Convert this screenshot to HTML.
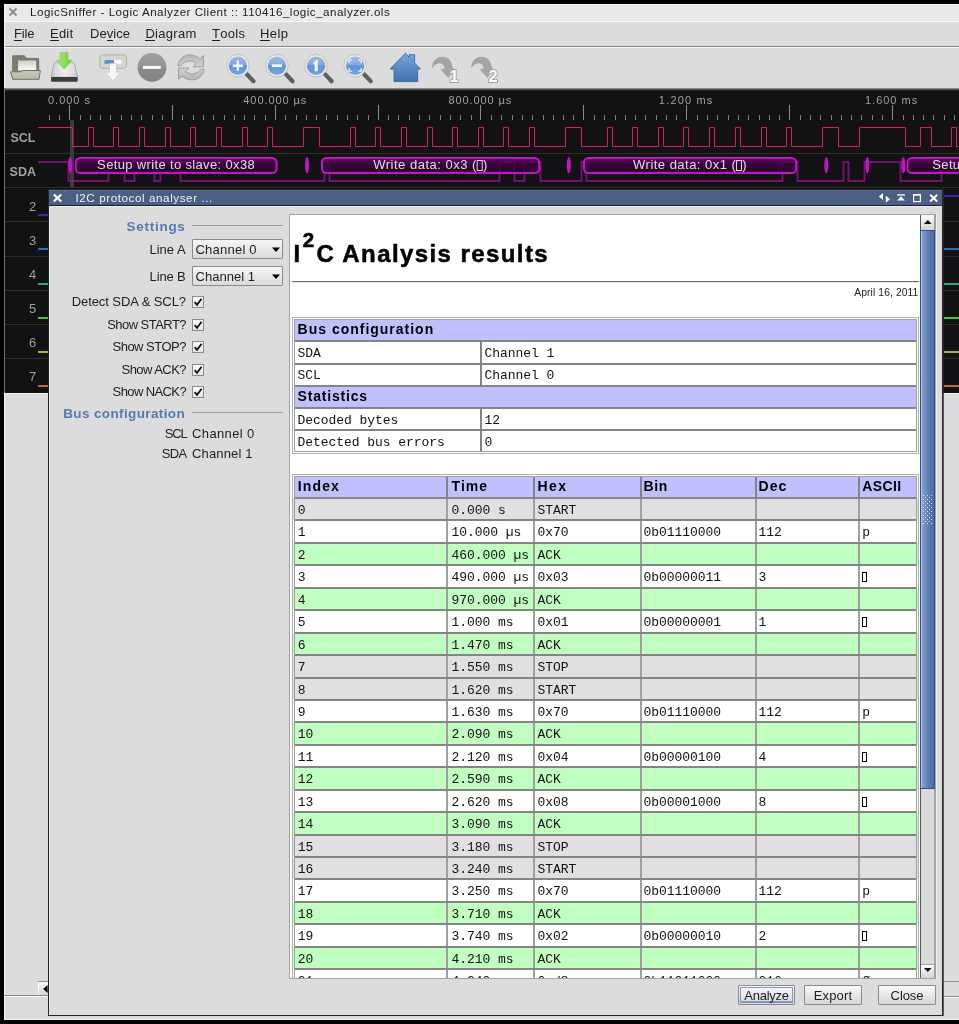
<!DOCTYPE html><html><head><meta charset="utf-8"><style>
html,body{margin:0;padding:0;width:959px;height:1024px;overflow:hidden;background:#000}
div,span,svg{position:absolute;display:block}
span{white-space:pre;font-kerning:none}
u{text-decoration:none;border-bottom:1px solid currentColor;display:inline-block;line-height:1;padding-bottom:0}
svg{overflow:visible}
</style></head><body>
<div style="left:0;top:0;width:959px;height:1024px;will-change:transform">
<div style="left:4px;top:4px;width:955px;height:1016px;background:#dcdcdc;"></div>
<div style="left:4px;top:4px;width:955px;height:17px;background:#e9e9e9;"></div>
<div style="left:4px;top:4px;width:955px;height:1px;background:#f6f6f6;"></div>
<div style="left:4px;top:21px;width:955px;height:1px;background:#f8f8f8;"></div>
<svg style="left:8px;top:7px;" width="10" height="10" viewBox="0 0 10 10"><path d="M1.5 1.5L8.5 8.5M8.5 1.5L1.5 8.5" stroke="#8c8c8c" stroke-width="2" fill="none"/></svg>
<span id="t0" style="left:30px;top:5px;font:400 11.6px/normal 'Liberation Sans',sans-serif;color:#1c1c1c;letter-spacing:0.491px;">LogicSniffer - Logic Analyzer Client :: 110416_logic_analyzer.ols</span>
<span id="t1" style="left:14px;top:26px;font:400 13px/normal 'Liberation Sans',sans-serif;color:#1e1e1e;letter-spacing:-0.156px;"><u>F</u>ile</span>
<span id="t2" style="left:50px;top:26px;font:400 13px/normal 'Liberation Sans',sans-serif;color:#1e1e1e;letter-spacing:0.198px;"><u>E</u>dit</span>
<span id="t3" style="left:90px;top:26px;font:400 13px/normal 'Liberation Sans',sans-serif;color:#1e1e1e;letter-spacing:0.050px;">De<u>v</u>ice</span>
<span id="t4" style="left:145.4px;top:26px;font:400 13px/normal 'Liberation Sans',sans-serif;color:#1e1e1e;letter-spacing:0.310px;"><u>D</u>iagram</span>
<span id="t5" style="left:212px;top:26px;font:400 13px/normal 'Liberation Sans',sans-serif;color:#1e1e1e;letter-spacing:0.297px;"><u>T</u>ools</span>
<span id="t6" style="left:260px;top:26px;font:400 13px/normal 'Liberation Sans',sans-serif;color:#1e1e1e;letter-spacing:0.417px;"><u>H</u>elp</span>
<div style="left:4px;top:46px;width:955px;height:1px;background:#868686;"></div>
<div style="left:4px;top:47px;width:955px;height:1px;background:#f6f6f6;"></div>
<div style="left:4px;top:88px;width:955px;height:1px;background:#8a8a8a;"></div>
<div style="left:4px;top:89px;width:955px;height:1px;background:#4a4a4a;"></div>
<div style="left:4px;top:90px;width:955px;height:1px;background:#262626;"></div>
<div style="left:5px;top:91px;width:954px;height:302px;background:#121212;"></div>
<div style="left:4px;top:88px;width:1px;height:305px;background:#6e6e6e;"></div>
<div style="left:4px;top:4px;width:1px;height:84px;background:#f4f4f4;"></div>
<div style="left:4px;top:393px;width:955px;height:1px;background:#f6f6f6;"></div>
<div style="left:4px;top:394px;width:1px;height:626px;background:#f4f4f4;"></div>
<svg style="left:0px;top:0px;" width="520" height="90" viewBox="0 0 520 90">
<defs>
<linearGradient id="gPaper" x1="0" y1="0" x2="0" y2="1"><stop offset="0" stop-color="#cfcfcf"/><stop offset="1" stop-color="#fbfbfb"/></linearGradient>
<linearGradient id="gFront" x1="0" y1="0" x2="0" y2="1"><stop offset="0" stop-color="#c8cab6"/><stop offset="1" stop-color="#b8baa6"/></linearGradient>
<linearGradient id="gArrow" x1="0" y1="0" x2="1" y2="0"><stop offset="0" stop-color="#a6e67a"/><stop offset="0.55" stop-color="#8ede55"/><stop offset="1" stop-color="#68c83a"/></linearGradient>
<linearGradient id="gDrive" x1="0" y1="0" x2="1" y2="0"><stop offset="0" stop-color="#c8c8c8"/><stop offset="0.5" stop-color="#f0f0f0"/><stop offset="1" stop-color="#cfcfcf"/></linearGradient>
<linearGradient id="gMinus" x1="0" y1="0" x2="0" y2="1"><stop offset="0" stop-color="#9c9c9c"/><stop offset="0.5" stop-color="#959595"/><stop offset="0.52" stop-color="#888888"/><stop offset="1" stop-color="#858585"/></linearGradient>
<linearGradient id="gRef" x1="0" y1="0" x2="0" y2="1"><stop offset="0" stop-color="#b4b4b4"/><stop offset="1" stop-color="#d0d0d0"/></linearGradient>
<linearGradient id="gZoom" x1="0" y1="0" x2="0" y2="1"><stop offset="0" stop-color="#9ab8e4"/><stop offset="0.45" stop-color="#85a9de"/><stop offset="0.5" stop-color="#5f93d6"/><stop offset="1" stop-color="#70a8ea"/></linearGradient>
<linearGradient id="gHome" x1="0" y1="0" x2="0" y2="1"><stop offset="0" stop-color="#7aa6da"/><stop offset="1" stop-color="#3f72b2"/></linearGradient>
</defs>
<!-- folder -->
<path d="M12.7 55.7H24.4L26.4 58.4H38.7V71.4H12.7Z" fill="#7c7e6c" stroke="#66685a" stroke-width="0.8"/>
<rect x="18.1" y="60.5" width="18.1" height="10" fill="url(#gPaper)"/>
<path d="M10.6 71.8H21L22.5 70.5H40.4L39 79.3H12.7Z" fill="url(#gFront)" stroke="#707266" stroke-width="1"/>
<!-- drive -->
<path d="M56 62.4H72.5Q74.2 62.4 74.6 64L77.7 77.2H51L53.9 64Q54.3 62.4 56 62.4Z" fill="url(#gDrive)" stroke="#a0a0a0" stroke-width="0.8"/>
<ellipse cx="64.4" cy="70.5" rx="9" ry="3.5" fill="none" stroke="#e6e6e6" stroke-width="1"/>
<rect x="51" y="77" width="26.7" height="4.8" rx="1.4" fill="#3a3d3d"/>
<path d="M60.2 52.6H67.9V60.3H71.9L64.1 69.3L56.6 60.3H60.2Z" fill="url(#gArrow)" stroke="#72c444" stroke-width="0.6"/>
<!-- capture -->
<rect x="99.7" y="54.9" width="26.9" height="13.5" rx="3.2" fill="#d4d7ce" stroke="#b0b2ac" stroke-width="1"/>
<rect x="104.5" y="60.1" width="9.6" height="3.6" fill="#5b90d2"/>
<rect x="114.1" y="60.1" width="7.7" height="3.6" fill="#fdfdfd"/>
<path d="M109.5 63.6H116.4V72.2H120.5L113 81L105.1 72.2H109.5Z" fill="#f6f6f6" stroke="#c4c4c4" stroke-width="0.6"/>
<!-- minus circle -->
<circle cx="152" cy="67.4" r="14.4" fill="url(#gMinus)"/>
<rect x="143" y="65.9" width="17.8" height="3" fill="#fafafa"/>
<!-- refresh -->
<g fill="url(#gRef)" stroke="#9c9c9c" stroke-width="0.9">
<path d="M177.7 65.5C179 58.5 184.5 54.9 190 54.9C194 54.9 197.5 56.5 200 58.6L203.5 55.5V66.8H193.1L196.4 63.4C194.2 61.6 191.8 61 189.6 61C186 61 183 62.8 181 65.5Z"/>
<path transform="rotate(180 191 67.4)" d="M177.7 65.5C179 58.5 184.5 54.9 190 54.9C194 54.9 197.5 56.5 200 58.6L203.5 55.5V66.8H193.1L196.4 63.4C194.2 61.6 191.8 61 189.6 61C186 61 183 62.8 181 65.5Z"/>
</g>
<line x1="246.85" y1="74.3" x2="253.45" y2="81.3" stroke="#5e625e" stroke-width="4.2" stroke-linecap="round"/><circle cx="237.85" cy="65.7" r="11.2" fill="#ecebe4" stroke="#b8b8b0" stroke-width="0.8"/><circle cx="237.85" cy="65.7" r="9.2" fill="url(#gZoom)"/><rect x="232.85" y="64.5" width="10" height="2.6" fill="#f4f6fa"/><rect x="236.75" y="60.5" width="2.2" height="10.2" fill="#f4f6fa"/><line x1="285.95" y1="74.3" x2="292.55" y2="81.3" stroke="#5e625e" stroke-width="4.2" stroke-linecap="round"/><circle cx="276.95" cy="65.7" r="11.2" fill="#ecebe4" stroke="#b8b8b0" stroke-width="0.8"/><circle cx="276.95" cy="65.7" r="9.2" fill="url(#gZoom)"/><rect x="271.95" y="64.3" width="10" height="2.8" fill="#f4f6fa"/><line x1="325.05" y1="74.3" x2="331.65000000000003" y2="81.3" stroke="#5e625e" stroke-width="4.2" stroke-linecap="round"/><circle cx="316.05" cy="65.7" r="11.2" fill="#ecebe4" stroke="#b8b8b0" stroke-width="0.8"/><circle cx="316.05" cy="65.7" r="9.2" fill="url(#gZoom)"/><path d="M313.45 62.5L316.45 59.7H317.85V71.2H314.65000000000003V63.7L313.45 64.7Z" fill="#f4f6fa"/><line x1="364.15" y1="74.3" x2="370.75" y2="81.3" stroke="#5e625e" stroke-width="4.2" stroke-linecap="round"/><circle cx="355.15" cy="65.7" r="11.2" fill="#ecebe4" stroke="#b8b8b0" stroke-width="0.8"/><circle cx="355.15" cy="65.7" r="9.2" fill="url(#gZoom)"/><path d="M349.15 63.2V60.2H352.15M361.15 63.2V60.2H358.15M349.15 68.2V71.2H352.15M361.15 68.2V71.2H358.15" stroke="#f0f4fa" stroke-width="1.3" fill="none"/>
<!-- home -->
<path d="M390.2 69.1L405.4 53.2L409.2 57.2V54.7H414.6V62.9L420.5 69.1H417.7V81.6H394V69.1Z" fill="url(#gHome)" stroke="#3767a6" stroke-width="0.9" stroke-linejoin="round"/>
<g transform="translate(0 0)"><path d="M432 68.5C432 61 436.5 56.8 442.5 56.8C448 56.8 451.8 61 452.2 66.2L453.8 68.9L448.4 78L440.4 69.3L444.6 68.4C444.2 65.4 442.2 63.2 439.2 63.2C436.2 63.2 433.6 65.5 432 68.5Z" fill="#a4a4a4"/>
<text x="454" y="81.8" text-anchor="middle" font-family="Liberation Sans" font-weight="700" font-size="16.5" fill="#ffffff" stroke="#a0a0a0" stroke-width="1.8" paint-order="stroke">1</text></g><g transform="translate(39.2 0)"><path d="M432 68.5C432 61 436.5 56.8 442.5 56.8C448 56.8 451.8 61 452.2 66.2L453.8 68.9L448.4 78L440.4 69.3L444.6 68.4C444.2 65.4 442.2 63.2 439.2 63.2C436.2 63.2 433.6 65.5 432 68.5Z" fill="#a4a4a4"/>
<text x="454" y="81.8" text-anchor="middle" font-family="Liberation Sans" font-weight="700" font-size="16.5" fill="#ffffff" stroke="#a0a0a0" stroke-width="1.8" paint-order="stroke">2</text></g></svg>
<svg style="left:0px;top:0px;" width="959" height="400" viewBox="0 0 959 400"><rect x="5" y="153" width="954" height="1" fill="#2e2e2e"/><rect x="5" y="187" width="954" height="1" fill="#2e2e2e"/><rect x="5" y="221" width="954" height="1" fill="#2e2e2e"/><rect x="5" y="256" width="954" height="1" fill="#2e2e2e"/><rect x="5" y="290" width="954" height="1" fill="#2e2e2e"/><rect x="5" y="324" width="954" height="1" fill="#2e2e2e"/><rect x="5" y="358" width="954" height="1" fill="#2e2e2e"/><rect x="69" y="105" width="1" height="15" fill="#8c8c8c"/><rect x="172" y="105" width="1" height="15" fill="#8c8c8c"/><rect x="275" y="105" width="1" height="15" fill="#8c8c8c"/><rect x="378" y="105" width="1" height="15" fill="#8c8c8c"/><rect x="480" y="105" width="1" height="15" fill="#8c8c8c"/><rect x="583" y="105" width="1" height="15" fill="#8c8c8c"/><rect x="686" y="105" width="1" height="15" fill="#8c8c8c"/><rect x="789" y="105" width="1" height="15" fill="#8c8c8c"/><rect x="892" y="105" width="1" height="15" fill="#8c8c8c"/><rect x="49" y="115" width="1" height="5" fill="#7c7c7c"/><rect x="59" y="115" width="1" height="5" fill="#7c7c7c"/><rect x="80" y="115" width="1" height="5" fill="#7c7c7c"/><rect x="90" y="115" width="1" height="5" fill="#7c7c7c"/><rect x="100" y="115" width="1" height="5" fill="#7c7c7c"/><rect x="110" y="115" width="1" height="5" fill="#7c7c7c"/><rect x="121" y="115" width="1" height="5" fill="#7c7c7c"/><rect x="131" y="115" width="1" height="5" fill="#7c7c7c"/><rect x="141" y="115" width="1" height="5" fill="#7c7c7c"/><rect x="152" y="115" width="1" height="5" fill="#7c7c7c"/><rect x="162" y="115" width="1" height="5" fill="#7c7c7c"/><rect x="182" y="115" width="1" height="5" fill="#7c7c7c"/><rect x="193" y="115" width="1" height="5" fill="#7c7c7c"/><rect x="203" y="115" width="1" height="5" fill="#7c7c7c"/><rect x="213" y="115" width="1" height="5" fill="#7c7c7c"/><rect x="224" y="115" width="1" height="5" fill="#7c7c7c"/><rect x="234" y="115" width="1" height="5" fill="#7c7c7c"/><rect x="244" y="115" width="1" height="5" fill="#7c7c7c"/><rect x="254" y="115" width="1" height="5" fill="#7c7c7c"/><rect x="265" y="115" width="1" height="5" fill="#7c7c7c"/><rect x="285" y="115" width="1" height="5" fill="#7c7c7c"/><rect x="296" y="115" width="1" height="5" fill="#7c7c7c"/><rect x="306" y="115" width="1" height="5" fill="#7c7c7c"/><rect x="316" y="115" width="1" height="5" fill="#7c7c7c"/><rect x="326" y="115" width="1" height="5" fill="#7c7c7c"/><rect x="337" y="115" width="1" height="5" fill="#7c7c7c"/><rect x="347" y="115" width="1" height="5" fill="#7c7c7c"/><rect x="357" y="115" width="1" height="5" fill="#7c7c7c"/><rect x="368" y="115" width="1" height="5" fill="#7c7c7c"/><rect x="388" y="115" width="1" height="5" fill="#7c7c7c"/><rect x="398" y="115" width="1" height="5" fill="#7c7c7c"/><rect x="409" y="115" width="1" height="5" fill="#7c7c7c"/><rect x="419" y="115" width="1" height="5" fill="#7c7c7c"/><rect x="429" y="115" width="1" height="5" fill="#7c7c7c"/><rect x="440" y="115" width="1" height="5" fill="#7c7c7c"/><rect x="450" y="115" width="1" height="5" fill="#7c7c7c"/><rect x="460" y="115" width="1" height="5" fill="#7c7c7c"/><rect x="471" y="115" width="1" height="5" fill="#7c7c7c"/><rect x="491" y="115" width="1" height="5" fill="#7c7c7c"/><rect x="501" y="115" width="1" height="5" fill="#7c7c7c"/><rect x="512" y="115" width="1" height="5" fill="#7c7c7c"/><rect x="522" y="115" width="1" height="5" fill="#7c7c7c"/><rect x="532" y="115" width="1" height="5" fill="#7c7c7c"/><rect x="543" y="115" width="1" height="5" fill="#7c7c7c"/><rect x="553" y="115" width="1" height="5" fill="#7c7c7c"/><rect x="563" y="115" width="1" height="5" fill="#7c7c7c"/><rect x="573" y="115" width="1" height="5" fill="#7c7c7c"/><rect x="594" y="115" width="1" height="5" fill="#7c7c7c"/><rect x="604" y="115" width="1" height="5" fill="#7c7c7c"/><rect x="615" y="115" width="1" height="5" fill="#7c7c7c"/><rect x="625" y="115" width="1" height="5" fill="#7c7c7c"/><rect x="635" y="115" width="1" height="5" fill="#7c7c7c"/><rect x="645" y="115" width="1" height="5" fill="#7c7c7c"/><rect x="656" y="115" width="1" height="5" fill="#7c7c7c"/><rect x="666" y="115" width="1" height="5" fill="#7c7c7c"/><rect x="676" y="115" width="1" height="5" fill="#7c7c7c"/><rect x="697" y="115" width="1" height="5" fill="#7c7c7c"/><rect x="707" y="115" width="1" height="5" fill="#7c7c7c"/><rect x="717" y="115" width="1" height="5" fill="#7c7c7c"/><rect x="728" y="115" width="1" height="5" fill="#7c7c7c"/><rect x="738" y="115" width="1" height="5" fill="#7c7c7c"/><rect x="748" y="115" width="1" height="5" fill="#7c7c7c"/><rect x="759" y="115" width="1" height="5" fill="#7c7c7c"/><rect x="769" y="115" width="1" height="5" fill="#7c7c7c"/><rect x="779" y="115" width="1" height="5" fill="#7c7c7c"/><rect x="800" y="115" width="1" height="5" fill="#7c7c7c"/><rect x="810" y="115" width="1" height="5" fill="#7c7c7c"/><rect x="820" y="115" width="1" height="5" fill="#7c7c7c"/><rect x="831" y="115" width="1" height="5" fill="#7c7c7c"/><rect x="841" y="115" width="1" height="5" fill="#7c7c7c"/><rect x="851" y="115" width="1" height="5" fill="#7c7c7c"/><rect x="861" y="115" width="1" height="5" fill="#7c7c7c"/><rect x="872" y="115" width="1" height="5" fill="#7c7c7c"/><rect x="882" y="115" width="1" height="5" fill="#7c7c7c"/><rect x="903" y="115" width="1" height="5" fill="#7c7c7c"/><rect x="913" y="115" width="1" height="5" fill="#7c7c7c"/><rect x="923" y="115" width="1" height="5" fill="#7c7c7c"/><rect x="933" y="115" width="1" height="5" fill="#7c7c7c"/><rect x="944" y="115" width="1" height="5" fill="#7c7c7c"/><rect x="954" y="115" width="1" height="5" fill="#7c7c7c"/><rect x="70" y="120" width="4" height="67" fill="#3a3a3a"/><polyline fill="none" stroke="#dc1e55" stroke-width="1" points="38,127.5 72.5,127.5 72.5,146.5 88.5,146.5 88.5,127.5 93.5,127.5 93.5,146.5 113.5,146.5 113.5,127.5 118.5,127.5 118.5,146.5 139.5,146.5 139.5,127.5 144.5,127.5 144.5,146.5 165.5,146.5 165.5,127.5 170.5,127.5 170.5,146.5 190.5,146.5 190.5,127.5 195.5,127.5 195.5,146.5 216.5,146.5 216.5,127.5 221.5,127.5 221.5,146.5 242.5,146.5 242.5,127.5 247.5,127.5 247.5,146.5 267.5,146.5 267.5,127.5 272.5,127.5 272.5,146.5 303.5,146.5 303.5,127.5 319.5,127.5 319.5,146.5 350.5,146.5 350.5,127.5 355.5,127.5 355.5,146.5 375.5,146.5 375.5,127.5 380.5,127.5 380.5,146.5 401.5,146.5 401.5,127.5 406.5,127.5 406.5,146.5 427.5,146.5 427.5,127.5 432.5,127.5 432.5,146.5 452.5,146.5 452.5,127.5 457.5,127.5 457.5,146.5 478.5,146.5 478.5,127.5 483.5,127.5 483.5,146.5 503.5,146.5 503.5,127.5 508.5,127.5 508.5,146.5 529.5,146.5 529.5,127.5 534.5,127.5 534.5,146.5 565.5,146.5 565.5,127.5 581.5,127.5 581.5,146.5 607.5,146.5 607.5,127.5 612.5,127.5 612.5,146.5 632.5,146.5 632.5,127.5 637.5,127.5 637.5,146.5 658.5,146.5 658.5,127.5 663.5,127.5 663.5,146.5 683.5,146.5 683.5,127.5 688.5,127.5 688.5,146.5 709.5,146.5 709.5,127.5 714.5,127.5 714.5,146.5 735.5,146.5 735.5,127.5 740.5,127.5 740.5,146.5 761.5,146.5 761.5,127.5 766.5,127.5 766.5,146.5 786.5,146.5 786.5,127.5 791.5,127.5 791.5,146.5 822.5,146.5 822.5,127.5 838.5,127.5 838.5,146.5 859.5,146.5 859.5,127.5 905.5,127.5 905.5,146.5 920.5,146.5 920.5,127.5 931.5,127.5 931.5,146.5 951.5,146.5 951.5,127.5 956.5,127.5 956.5,146.5 960,146.5"/><polyline fill="none" stroke="#b010b4" stroke-opacity="0.6" stroke-width="2" points="38,162 68.5,162 68.5,181 108.5,181 108.5,162 124.5,162 124.5,181 134.5,181 134.5,162 154.5,162 154.5,181 160.5,181 160.5,162 180.5,162 180.5,181 324.5,181 324.5,162 329.5,162 329.5,181 499.5,181 499.5,162 514.5,162 514.5,181 524.5,181 524.5,162 540.5,162 540.5,181 581.5,181 581.5,162 586.5,162 586.5,181 782.5,181 782.5,162 797.5,162 797.5,181 843.5,181 843.5,162 848.5,162 848.5,181 864.5,181 864.5,162 900.5,162 900.5,181 941.5,181 941.5,162 960,162"/><defs><linearGradient id="gBub" x1="0" y1="0" x2="0" y2="1"><stop offset="0" stop-color="#6c086c" stop-opacity="0.85"/><stop offset="0.45" stop-color="#3c0440" stop-opacity="0.82"/><stop offset="1" stop-color="#2a0030" stop-opacity="0.82"/></linearGradient></defs><rect x="75.7" y="158" width="200.90000000000003" height="15" rx="4.5" fill="url(#gBub)" stroke="#c412c8" stroke-width="2"/><rect x="322" y="158" width="217.20000000000005" height="15" rx="4.5" fill="url(#gBub)" stroke="#c412c8" stroke-width="2"/><rect x="584" y="158" width="212.20000000000005" height="15" rx="4.5" fill="url(#gBub)" stroke="#c412c8" stroke-width="2"/><rect x="907.6" y="158" width="191.39999999999998" height="15" rx="4.5" fill="url(#gBub)" stroke="#c412c8" stroke-width="2"/><ellipse cx="70.1" cy="165.3" rx="2" ry="8.2" fill="#c412c8"/><ellipse cx="307" cy="165.3" rx="2" ry="8.2" fill="#c412c8"/><ellipse cx="568.8" cy="165.3" rx="2" ry="8.2" fill="#c412c8"/><ellipse cx="826.3" cy="165.3" rx="2" ry="8.2" fill="#c412c8"/><ellipse cx="867.3" cy="165.3" rx="2" ry="8.2" fill="#c412c8"/><ellipse cx="903.3" cy="165.3" rx="2" ry="8.2" fill="#c412c8"/><rect x="38" y="214" width="10" height="2" fill="#3a22b4"/><rect x="943" y="195" width="16" height="2" fill="#3a22b4"/><rect x="38" y="248" width="10" height="2" fill="#2070d0"/><rect x="943" y="248" width="16" height="2" fill="#2070d0"/><rect x="38" y="283" width="10" height="2" fill="#18b48a"/><rect x="943" y="283" width="16" height="2" fill="#18b48a"/><rect x="38" y="317" width="10" height="2" fill="#40cc30"/><rect x="943" y="317" width="16" height="2" fill="#40cc30"/><rect x="38" y="351" width="10" height="2" fill="#a8b818"/><rect x="943" y="351" width="16" height="2" fill="#a8b818"/><rect x="38" y="385" width="10" height="2" fill="#d06818"/><rect x="943" y="385" width="16" height="2" fill="#d06818"/></svg>
<span id="t7" style="right:923.5px;top:131px;font:700 12.5px/normal 'Liberation Sans',sans-serif;color:#a0a0a4;letter-spacing:0.000px;">SCL</span>
<span id="t8" style="right:923px;top:165px;font:700 12.5px/normal 'Liberation Sans',sans-serif;color:#a0a0a4;letter-spacing:0.000px;">SDA</span>
<span id="t9" style="right:922.7px;top:199px;font:400 13px/normal 'Liberation Sans',sans-serif;color:#a0a0a4;letter-spacing:0.000px;">2</span>
<span id="t10" style="right:922.7px;top:233px;font:400 13px/normal 'Liberation Sans',sans-serif;color:#a0a0a4;letter-spacing:0.000px;">3</span>
<span id="t11" style="right:922.7px;top:267px;font:400 13px/normal 'Liberation Sans',sans-serif;color:#a0a0a4;letter-spacing:0.000px;">4</span>
<span id="t12" style="right:922.7px;top:301px;font:400 13px/normal 'Liberation Sans',sans-serif;color:#a0a0a4;letter-spacing:0.000px;">5</span>
<span id="t13" style="right:922.7px;top:335px;font:400 13px/normal 'Liberation Sans',sans-serif;color:#a0a0a4;letter-spacing:0.000px;">6</span>
<span id="t14" style="right:922.7px;top:369px;font:400 13px/normal 'Liberation Sans',sans-serif;color:#a0a0a4;letter-spacing:0.000px;">7</span>
<span id="t15" style="left:69.5px;transform:translateX(-50%);top:94px;font:400 11px/normal 'Liberation Sans',sans-serif;color:#a0a0a0;letter-spacing:0.984px;">0.000 s</span>
<span id="t16" style="left:275.3px;transform:translateX(-50%);top:94px;font:400 11px/normal 'Liberation Sans',sans-serif;color:#a0a0a0;letter-spacing:0.927px;">400.000 µs</span>
<span id="t17" style="left:480.4px;transform:translateX(-50%);top:94px;font:400 11px/normal 'Liberation Sans',sans-serif;color:#a0a0a0;letter-spacing:0.894px;">800.000 µs</span>
<span id="t18" style="left:686.2px;transform:translateX(-50%);top:94px;font:400 11px/normal 'Liberation Sans',sans-serif;color:#a0a0a0;letter-spacing:1.179px;">1.200 ms</span>
<span id="t19" style="left:891.6px;transform:translateX(-50%);top:94px;font:400 11px/normal 'Liberation Sans',sans-serif;color:#a0a0a0;letter-spacing:1.007px;">1.600 ms</span>
<span id="t20" style="left:176.1px;transform:translateX(-50%);top:157px;font:400 13px/normal 'Liberation Sans',sans-serif;color:#e6d8e6;letter-spacing:0.350px;">Setup write to slave: 0x38</span>
<span id="t21" style="left:430.5px;transform:translateX(-50%);top:157px;font:400 13px/normal 'Liberation Sans',sans-serif;color:#e6d8e6;letter-spacing:0.507px;">Write data: 0x3 (<span style="position:relative;display:inline-block;width:6px;height:11px;border:1px solid currentColor;box-sizing:border-box;vertical-align:-2px"></span>)</span>
<span id="t22" style="left:690.1px;transform:translateX(-50%);top:157px;font:400 13px/normal 'Liberation Sans',sans-serif;color:#e6d8e6;letter-spacing:0.477px;">Write data: 0x1 (<span style="position:relative;display:inline-block;width:6px;height:11px;border:1px solid currentColor;box-sizing:border-box;vertical-align:-2px"></span>)</span>
<span id="t23" style="left:932.3px;top:157px;font:400 13px/normal 'Liberation Sans',sans-serif;color:#e6d8e6;letter-spacing:0.350px;">Setup write to slave: 0x38</span>
<div style="left:38px;top:981px;width:10px;height:1px;background:#8c8c8c;"></div>
<div style="left:38px;top:982px;width:10px;height:13px;background:linear-gradient(#fafafa,#d4d4d4);border-left:1px solid #f8f8f8;box-sizing:border-box"></div>
<svg style="left:42px;top:984px;" width="6" height="10" viewBox="0 0 6 10"><path d="M1.2 5L5.6 1V9Z" fill="#000"/></svg>
<div style="left:4px;top:995px;width:44px;height:1px;background:#8c8c8c;"></div>
<div style="left:4px;top:996px;width:44px;height:1px;background:#f8f8f8;"></div>
<div style="left:943px;top:981px;width:16px;height:1px;background:#8c8c8c;"></div>
<div style="left:943px;top:996px;width:16px;height:1px;background:#8c8c8c;"></div>
<div style="left:943px;top:997px;width:16px;height:1px;background:#f8f8f8;"></div>
<div style="left:4px;top:1019px;width:955px;height:1px;background:#f0f0f0;"></div>
<div style="left:48px;top:189px;width:896px;height:827px;background:#262626;"></div>
<div style="left:943px;top:393px;width:1px;height:623px;background:#5c5c5c;"></div>
<div style="left:49px;top:190px;width:893px;height:16px;background:#4b5f84;"></div>
<div style="left:49px;top:190px;width:893px;height:1px;background:#5e7094;"></div>
<div style="left:49px;top:205px;width:893px;height:1px;background:#1c2230;"></div>
<div style="left:49px;top:206px;width:893px;height:809px;background:#dcdcdc;"></div>
<div style="left:49px;top:206px;width:893px;height:1px;background:#ececec;"></div>
<div style="left:49px;top:206px;width:1px;height:809px;background:#e4e4e4;"></div>
<svg style="left:52px;top:193px;" width="11" height="10" viewBox="0 0 11 10"><path d="M1.8 1.5L9.2 8.5M9.2 1.5L1.8 8.5" stroke="#fff" stroke-width="2.3" fill="none"/></svg>
<span id="t24" style="left:75.5px;top:191px;font:400 11.6px/normal 'Liberation Sans',sans-serif;color:#f0f2f6;letter-spacing:0.598px;">I2C protocol analyser ...</span>
<svg style="left:0px;top:0px;" width="959" height="220" viewBox="0 0 959 220"><path d="M878.8 196.5L883 193V200Z" fill="#fff"/><path d="M890 199.3L885.8 195.8V202.8Z" fill="#fff"/><rect x="897" y="194.3" width="8" height="1.3" fill="#fff"/><path d="M897.2 200.6L901 196.2L904.8 200.6Z" fill="#fff"/><rect x="913.6" y="194.6" width="6.8" height="7" fill="none" stroke="#fff" stroke-width="1.2"/><rect x="913" y="194" width="8" height="1.6" fill="#fff"/><path d="M930.2 194.8L937.2 201.4M937.2 194.8L930.2 201.4" stroke="#fff" stroke-width="2" fill="none"/></svg>
<span id="t25" style="right:773.4px;top:219px;font:700 13.5px/normal 'Liberation Sans',sans-serif;color:#5878b4;letter-spacing:0.733px;">Settings</span>
<div style="left:192px;top:225px;width:91px;height:1px;background:#9a9a9a;"></div>
<span id="t26" style="right:773.4px;top:242px;font:400 13px/normal 'Liberation Sans',sans-serif;color:#1e1e1e;letter-spacing:0.009px;">Line A</span>
<span id="t27" style="right:773.4px;top:269px;font:400 13px/normal 'Liberation Sans',sans-serif;color:#1e1e1e;letter-spacing:-0.135px;">Line B</span>
<div style="left:192px;top:239px;width:91px;height:20px;box-sizing:border-box;border:1px solid #8a8a8a;background:linear-gradient(#f6f6f6,#dadada);border-radius:1px"></div>
<span id="t28" style="left:195.5px;top:242px;font:400 13px/normal 'Liberation Sans',sans-serif;color:#1e1e1e;letter-spacing:0.227px;">Channel 0</span>
<svg style="left:271px;top:247px;" width="10" height="6" viewBox="0 0 10 6"><path d="M1 0.5H9L5 5Z" fill="#000"/></svg>
<div style="left:192px;top:266px;width:91px;height:20px;box-sizing:border-box;border:1px solid #8a8a8a;background:linear-gradient(#f6f6f6,#dadada);border-radius:1px"></div>
<span id="t29" style="left:195.5px;top:269px;font:400 13px/normal 'Liberation Sans',sans-serif;color:#1e1e1e;letter-spacing:0.027px;">Channel 1</span>
<svg style="left:271px;top:274px;" width="10" height="6" viewBox="0 0 10 6"><path d="M1 0.5H9L5 5Z" fill="#000"/></svg>
<span id="t30" style="right:773px;top:294px;font:400 13px/normal 'Liberation Sans',sans-serif;color:#1e1e1e;letter-spacing:-0.077px;">Detect SDA &amp; SCL?</span>
<div style="left:192px;top:296px;width:12px;height:12px;box-sizing:border-box;border:1px solid #8a8a8a;background:linear-gradient(#fdfdfd,#e4e4e4)"></div>
<svg style="left:193px;top:297px;" width="10" height="10" viewBox="0 0 10 10"><path d="M1.6 5.2L4 7.8L8.6 1.8" stroke="#101010" stroke-width="1.8" fill="none"/></svg>
<span id="t31" style="right:773px;top:317px;font:400 13px/normal 'Liberation Sans',sans-serif;color:#1e1e1e;letter-spacing:-0.538px;">Show START?</span>
<div style="left:192px;top:319px;width:12px;height:12px;box-sizing:border-box;border:1px solid #8a8a8a;background:linear-gradient(#fdfdfd,#e4e4e4)"></div>
<svg style="left:193px;top:320px;" width="10" height="10" viewBox="0 0 10 10"><path d="M1.6 5.2L4 7.8L8.6 1.8" stroke="#101010" stroke-width="1.8" fill="none"/></svg>
<span id="t32" style="right:773px;top:339px;font:400 13px/normal 'Liberation Sans',sans-serif;color:#1e1e1e;letter-spacing:-0.503px;">Show STOP?</span>
<div style="left:192px;top:341px;width:12px;height:12px;box-sizing:border-box;border:1px solid #8a8a8a;background:linear-gradient(#fdfdfd,#e4e4e4)"></div>
<svg style="left:193px;top:342px;" width="10" height="10" viewBox="0 0 10 10"><path d="M1.6 5.2L4 7.8L8.6 1.8" stroke="#101010" stroke-width="1.8" fill="none"/></svg>
<span id="t33" style="right:773px;top:362px;font:400 13px/normal 'Liberation Sans',sans-serif;color:#1e1e1e;letter-spacing:-0.547px;">Show ACK?</span>
<div style="left:192px;top:364px;width:12px;height:12px;box-sizing:border-box;border:1px solid #8a8a8a;background:linear-gradient(#fdfdfd,#e4e4e4)"></div>
<svg style="left:193px;top:365px;" width="10" height="10" viewBox="0 0 10 10"><path d="M1.6 5.2L4 7.8L8.6 1.8" stroke="#101010" stroke-width="1.8" fill="none"/></svg>
<span id="t34" style="right:773px;top:384px;font:400 13px/normal 'Liberation Sans',sans-serif;color:#1e1e1e;letter-spacing:-0.609px;">Show NACK?</span>
<div style="left:192px;top:386px;width:12px;height:12px;box-sizing:border-box;border:1px solid #8a8a8a;background:linear-gradient(#fdfdfd,#e4e4e4)"></div>
<svg style="left:193px;top:387px;" width="10" height="10" viewBox="0 0 10 10"><path d="M1.6 5.2L4 7.8L8.6 1.8" stroke="#101010" stroke-width="1.8" fill="none"/></svg>
<span id="t35" style="right:773.9px;top:406px;font:700 13.5px/normal 'Liberation Sans',sans-serif;color:#5878b4;letter-spacing:0.381px;">Bus configuration</span>
<div style="left:192px;top:412px;width:91px;height:1px;background:#9a9a9a;"></div>
<span id="t36" style="right:772.6px;top:426px;font:400 13px/normal 'Liberation Sans',sans-serif;color:#1e1e1e;letter-spacing:-1.248px;">SCL</span>
<span id="t37" style="left:192.1px;top:426px;font:400 13px/normal 'Liberation Sans',sans-serif;color:#1e1e1e;letter-spacing:0.352px;">Channel 0</span>
<span id="t38" style="right:772.6px;top:446px;font:400 13px/normal 'Liberation Sans',sans-serif;color:#1e1e1e;letter-spacing:-0.717px;">SDA</span>
<span id="t39" style="left:192.1px;top:446px;font:400 13px/normal 'Liberation Sans',sans-serif;color:#1e1e1e;letter-spacing:0.127px;">Channel 1</span>
<div style="left:289px;top:214px;width:647px;height:765px;background:#a4a4a4;"></div>
<div style="left:290px;top:215px;width:630px;height:763px;overflow:hidden;background:#fff"><div style="left:-290px;top:-215px;width:959px;height:1024px">
<span id="t40" style="left:293.5px;top:240px;font:700 24px/normal 'Liberation Sans',sans-serif;color:#000;letter-spacing:0.000px;-webkit-text-stroke:0.5px #000">I</span>
<span id="t41" style="left:302.8px;top:228px;font:700 20.5px/normal 'Liberation Sans',sans-serif;color:#000;letter-spacing:0.000px;-webkit-text-stroke:0.6px #000">2</span>
<span id="t42" style="left:316.4px;top:240px;font:700 24px/normal 'Liberation Sans',sans-serif;color:#000;letter-spacing:1.417px;-webkit-text-stroke:0.5px #000">C Analysis results</span>
<div style="left:292px;top:281px;width:627px;height:1px;background:#6e6e6e;"></div>
<div style="left:292px;top:282px;width:627px;height:1px;background:#e8e8e8;"></div>
<span id="t43" style="right:40.60000000000002px;top:287px;font:400 10.3px/normal 'Liberation Sans',sans-serif;color:#1e1e1e;letter-spacing:0.094px;">April 16, 2011</span>
<div style="left:292px;top:317px;width:627px;height:137px;background:#b0b0b0;"></div>
<div style="left:293px;top:318px;width:625px;height:135px;background:#fff;"></div>
<div style="left:294px;top:319px;width:623px;height:133px;background:#a0a0a0;"></div>
<div style="left:295px;top:320px;width:621px;height:20px;background:#c0c0ff;"></div>
<div style="left:295px;top:340px;width:621px;height:2px;background:#848484;"></div>
<div style="left:295px;top:342px;width:185px;height:21px;background:#fff;"></div>
<div style="left:480px;top:342px;width:2px;height:21px;background:#848484;"></div>
<div style="left:482px;top:342px;width:434px;height:21px;background:#fff;"></div>
<div style="left:295px;top:363px;width:621px;height:2px;background:#848484;"></div>
<div style="left:295px;top:365px;width:185px;height:20px;background:#fff;"></div>
<div style="left:480px;top:365px;width:2px;height:20px;background:#848484;"></div>
<div style="left:482px;top:365px;width:434px;height:20px;background:#fff;"></div>
<div style="left:295px;top:385px;width:621px;height:2px;background:#848484;"></div>
<div style="left:295px;top:387px;width:621px;height:20px;background:#c0c0ff;"></div>
<div style="left:295px;top:407px;width:621px;height:2px;background:#848484;"></div>
<div style="left:295px;top:409px;width:185px;height:20px;background:#fff;"></div>
<div style="left:480px;top:409px;width:2px;height:20px;background:#848484;"></div>
<div style="left:482px;top:409px;width:434px;height:20px;background:#fff;"></div>
<div style="left:295px;top:429px;width:621px;height:2px;background:#848484;"></div>
<div style="left:295px;top:431px;width:185px;height:20px;background:#fff;"></div>
<div style="left:480px;top:431px;width:2px;height:20px;background:#848484;"></div>
<div style="left:482px;top:431px;width:434px;height:20px;background:#fff;"></div>
<span id="t44" style="left:297.6px;top:321px;font:700 14px/normal 'Liberation Sans',sans-serif;color:#000;letter-spacing:0.989px;">Bus configuration</span>
<span id="t45" style="left:297.6px;top:388px;font:700 14px/normal 'Liberation Sans',sans-serif;color:#000;letter-spacing:0.806px;">Statistics</span>
<span id="t46" style="left:297.6px;top:346px;font:400 13px/normal 'Liberation Mono',monospace;color:#111;letter-spacing:-0.050px;">SDA</span>
<span id="t47" style="left:484.6px;top:346px;font:400 13px/normal 'Liberation Mono',monospace;color:#111;letter-spacing:-0.050px;">Channel 1</span>
<span id="t48" style="left:297.6px;top:368px;font:400 13px/normal 'Liberation Mono',monospace;color:#111;letter-spacing:-0.050px;">SCL</span>
<span id="t49" style="left:484.6px;top:368px;font:400 13px/normal 'Liberation Mono',monospace;color:#111;letter-spacing:-0.050px;">Channel 0</span>
<span id="t50" style="left:297.6px;top:413px;font:400 13px/normal 'Liberation Mono',monospace;color:#111;letter-spacing:-0.050px;">Decoded bytes</span>
<span id="t51" style="left:484.6px;top:413px;font:400 13px/normal 'Liberation Mono',monospace;color:#111;letter-spacing:-0.050px;">12</span>
<span id="t52" style="left:297.6px;top:435px;font:400 13px/normal 'Liberation Mono',monospace;color:#111;letter-spacing:-0.050px;">Detected bus errors</span>
<span id="t53" style="left:484.6px;top:435px;font:400 13px/normal 'Liberation Mono',monospace;color:#111;letter-spacing:-0.050px;">0</span>
<div style="left:292px;top:474px;width:627px;height:520px;background:#b0b0b0;"></div>
<div style="left:293px;top:475px;width:625px;height:520px;background:#fff;"></div>
<div style="left:294px;top:476px;width:623px;height:520px;background:#a0a0a0;"></div>
<div style="left:295px;top:477px;width:621px;height:20px;background:#c0c0ff;"></div>
<div style="left:446px;top:477px;width:2px;height:20px;background:#848484;"></div>
<div style="left:533px;top:477px;width:2px;height:20px;background:#848484;"></div>
<div style="left:640px;top:477px;width:2px;height:20px;background:#848484;"></div>
<div style="left:755px;top:477px;width:2px;height:20px;background:#848484;"></div>
<div style="left:858px;top:477px;width:2px;height:20px;background:#848484;"></div>
<span id="t54" style="left:297.8px;top:478px;font:700 14px/normal 'Liberation Sans',sans-serif;color:#000;letter-spacing:1.130px;">Index</span>
<span id="t55" style="left:451.6px;top:478px;font:700 14px/normal 'Liberation Sans',sans-serif;color:#000;letter-spacing:0.987px;">Time</span>
<span id="t56" style="left:537.6px;top:478px;font:700 14px/normal 'Liberation Sans',sans-serif;color:#000;letter-spacing:1.406px;">Hex</span>
<span id="t57" style="left:643.4px;top:478px;font:700 14px/normal 'Liberation Sans',sans-serif;color:#000;letter-spacing:0.719px;">Bin</span>
<span id="t58" style="left:758.6px;top:478px;font:700 14px/normal 'Liberation Sans',sans-serif;color:#000;letter-spacing:1.056px;">Dec</span>
<span id="t59" style="left:862.2px;top:478px;font:700 14px/normal 'Liberation Sans',sans-serif;color:#000;letter-spacing:0.414px;">ASCII</span>
<div style="left:295px;top:497px;width:621px;height:2px;background:#848484;"></div>
<div style="left:293px;top:498px;width:1px;height:22px;background:#e0e0e0;"></div>
<div style="left:917px;top:498px;width:1px;height:22px;background:#e0e0e0;"></div>
<div style="left:295px;top:499px;width:151px;height:20px;background:#e0e0e0;"></div>
<div style="left:448px;top:499px;width:85px;height:20px;background:#e0e0e0;"></div>
<div style="left:535px;top:499px;width:105px;height:20px;background:#e0e0e0;"></div>
<div style="left:642px;top:499px;width:113px;height:20px;background:#e0e0e0;"></div>
<div style="left:757px;top:499px;width:101px;height:20px;background:#e0e0e0;"></div>
<div style="left:860px;top:499px;width:56px;height:20px;background:#e0e0e0;"></div>
<span id="t60" style="left:297.8px;top:503px;font:400 13px/normal 'Liberation Mono',monospace;color:#111;letter-spacing:-0.050px;">0</span>
<span id="t61" style="left:451.6px;top:503px;font:400 13px/normal 'Liberation Mono',monospace;color:#111;letter-spacing:-0.050px;">0.000 s</span>
<span id="t62" style="left:537.6px;top:503px;font:400 13px/normal 'Liberation Mono',monospace;color:#111;letter-spacing:-0.050px;">START</span>
<div style="left:295px;top:519px;width:621px;height:2px;background:#848484;"></div>
<div style="left:293px;top:520px;width:1px;height:23px;background:#f6f6f6;"></div>
<div style="left:917px;top:520px;width:1px;height:23px;background:#fff;"></div>
<div style="left:295px;top:521px;width:151px;height:21px;background:#fff;"></div>
<div style="left:448px;top:521px;width:85px;height:21px;background:#fff;"></div>
<div style="left:535px;top:521px;width:105px;height:21px;background:#fff;"></div>
<div style="left:642px;top:521px;width:113px;height:21px;background:#fff;"></div>
<div style="left:757px;top:521px;width:101px;height:21px;background:#fff;"></div>
<div style="left:860px;top:521px;width:56px;height:21px;background:#fff;"></div>
<span id="t63" style="left:297.8px;top:525px;font:400 13px/normal 'Liberation Mono',monospace;color:#111;letter-spacing:-0.050px;">1</span>
<span id="t64" style="left:451.6px;top:525px;font:400 13px/normal 'Liberation Mono',monospace;color:#111;letter-spacing:-0.050px;">10.000 µs</span>
<span id="t65" style="left:537.6px;top:525px;font:400 13px/normal 'Liberation Mono',monospace;color:#111;letter-spacing:-0.050px;">0x70</span>
<span id="t66" style="left:643.4px;top:525px;font:400 13px/normal 'Liberation Mono',monospace;color:#111;letter-spacing:-0.050px;">0b01110000</span>
<span id="t67" style="left:758.6px;top:525px;font:400 13px/normal 'Liberation Mono',monospace;color:#111;letter-spacing:-0.050px;">112</span>
<span id="t68" style="left:862.2px;top:525px;font:400 13px/normal 'Liberation Mono',monospace;color:#111;letter-spacing:-0.050px;">p</span>
<div style="left:295px;top:542px;width:621px;height:2px;background:#848484;"></div>
<div style="left:293px;top:543px;width:1px;height:22px;background:#c0ffc0;"></div>
<div style="left:917px;top:543px;width:1px;height:22px;background:#c0ffc0;"></div>
<div style="left:295px;top:544px;width:151px;height:20px;background:#c0ffc0;"></div>
<div style="left:448px;top:544px;width:85px;height:20px;background:#c0ffc0;"></div>
<div style="left:535px;top:544px;width:105px;height:20px;background:#c0ffc0;"></div>
<div style="left:642px;top:544px;width:113px;height:20px;background:#c0ffc0;"></div>
<div style="left:757px;top:544px;width:101px;height:20px;background:#c0ffc0;"></div>
<div style="left:860px;top:544px;width:56px;height:20px;background:#c0ffc0;"></div>
<span id="t69" style="left:297.8px;top:548px;font:400 13px/normal 'Liberation Mono',monospace;color:#111;letter-spacing:-0.050px;">2</span>
<span id="t70" style="left:451.6px;top:548px;font:400 13px/normal 'Liberation Mono',monospace;color:#111;letter-spacing:-0.050px;">460.000 µs</span>
<span id="t71" style="left:537.6px;top:548px;font:400 13px/normal 'Liberation Mono',monospace;color:#111;letter-spacing:-0.050px;">ACK</span>
<div style="left:295px;top:564px;width:621px;height:2px;background:#848484;"></div>
<div style="left:293px;top:565px;width:1px;height:23px;background:#f6f6f6;"></div>
<div style="left:917px;top:565px;width:1px;height:23px;background:#fff;"></div>
<div style="left:295px;top:566px;width:151px;height:21px;background:#fff;"></div>
<div style="left:448px;top:566px;width:85px;height:21px;background:#fff;"></div>
<div style="left:535px;top:566px;width:105px;height:21px;background:#fff;"></div>
<div style="left:642px;top:566px;width:113px;height:21px;background:#fff;"></div>
<div style="left:757px;top:566px;width:101px;height:21px;background:#fff;"></div>
<div style="left:860px;top:566px;width:56px;height:21px;background:#fff;"></div>
<span id="t72" style="left:297.8px;top:570px;font:400 13px/normal 'Liberation Mono',monospace;color:#111;letter-spacing:-0.050px;">3</span>
<span id="t73" style="left:451.6px;top:570px;font:400 13px/normal 'Liberation Mono',monospace;color:#111;letter-spacing:-0.050px;">490.000 µs</span>
<span id="t74" style="left:537.6px;top:570px;font:400 13px/normal 'Liberation Mono',monospace;color:#111;letter-spacing:-0.050px;">0x03</span>
<span id="t75" style="left:643.4px;top:570px;font:400 13px/normal 'Liberation Mono',monospace;color:#111;letter-spacing:-0.050px;">0b00000011</span>
<span id="t76" style="left:758.6px;top:570px;font:400 13px/normal 'Liberation Mono',monospace;color:#111;letter-spacing:-0.050px;">3</span>
<span id="t77" style="left:862.2px;top:570px;font:400 13px/normal 'Liberation Mono',monospace;color:#111;letter-spacing:-0.050px;"><span style="position:relative;display:inline-block;width:5px;height:10px;border:1px solid #000;box-sizing:border-box;vertical-align:-1px"></span></span>
<div style="left:295px;top:587px;width:621px;height:2px;background:#848484;"></div>
<div style="left:293px;top:588px;width:1px;height:22px;background:#c0ffc0;"></div>
<div style="left:917px;top:588px;width:1px;height:22px;background:#c0ffc0;"></div>
<div style="left:295px;top:589px;width:151px;height:20px;background:#c0ffc0;"></div>
<div style="left:448px;top:589px;width:85px;height:20px;background:#c0ffc0;"></div>
<div style="left:535px;top:589px;width:105px;height:20px;background:#c0ffc0;"></div>
<div style="left:642px;top:589px;width:113px;height:20px;background:#c0ffc0;"></div>
<div style="left:757px;top:589px;width:101px;height:20px;background:#c0ffc0;"></div>
<div style="left:860px;top:589px;width:56px;height:20px;background:#c0ffc0;"></div>
<span id="t78" style="left:297.8px;top:593px;font:400 13px/normal 'Liberation Mono',monospace;color:#111;letter-spacing:-0.050px;">4</span>
<span id="t79" style="left:451.6px;top:593px;font:400 13px/normal 'Liberation Mono',monospace;color:#111;letter-spacing:-0.050px;">970.000 µs</span>
<span id="t80" style="left:537.6px;top:593px;font:400 13px/normal 'Liberation Mono',monospace;color:#111;letter-spacing:-0.050px;">ACK</span>
<div style="left:295px;top:609px;width:621px;height:2px;background:#848484;"></div>
<div style="left:293px;top:610px;width:1px;height:23px;background:#f6f6f6;"></div>
<div style="left:917px;top:610px;width:1px;height:23px;background:#fff;"></div>
<div style="left:295px;top:611px;width:151px;height:21px;background:#fff;"></div>
<div style="left:448px;top:611px;width:85px;height:21px;background:#fff;"></div>
<div style="left:535px;top:611px;width:105px;height:21px;background:#fff;"></div>
<div style="left:642px;top:611px;width:113px;height:21px;background:#fff;"></div>
<div style="left:757px;top:611px;width:101px;height:21px;background:#fff;"></div>
<div style="left:860px;top:611px;width:56px;height:21px;background:#fff;"></div>
<span id="t81" style="left:297.8px;top:615px;font:400 13px/normal 'Liberation Mono',monospace;color:#111;letter-spacing:-0.050px;">5</span>
<span id="t82" style="left:451.6px;top:615px;font:400 13px/normal 'Liberation Mono',monospace;color:#111;letter-spacing:-0.050px;">1.000 ms</span>
<span id="t83" style="left:537.6px;top:615px;font:400 13px/normal 'Liberation Mono',monospace;color:#111;letter-spacing:-0.050px;">0x01</span>
<span id="t84" style="left:643.4px;top:615px;font:400 13px/normal 'Liberation Mono',monospace;color:#111;letter-spacing:-0.050px;">0b00000001</span>
<span id="t85" style="left:758.6px;top:615px;font:400 13px/normal 'Liberation Mono',monospace;color:#111;letter-spacing:-0.050px;">1</span>
<span id="t86" style="left:862.2px;top:615px;font:400 13px/normal 'Liberation Mono',monospace;color:#111;letter-spacing:-0.050px;"><span style="position:relative;display:inline-block;width:5px;height:10px;border:1px solid #000;box-sizing:border-box;vertical-align:-1px"></span></span>
<div style="left:295px;top:632px;width:621px;height:2px;background:#848484;"></div>
<div style="left:293px;top:633px;width:1px;height:22px;background:#c0ffc0;"></div>
<div style="left:917px;top:633px;width:1px;height:22px;background:#c0ffc0;"></div>
<div style="left:295px;top:634px;width:151px;height:20px;background:#c0ffc0;"></div>
<div style="left:448px;top:634px;width:85px;height:20px;background:#c0ffc0;"></div>
<div style="left:535px;top:634px;width:105px;height:20px;background:#c0ffc0;"></div>
<div style="left:642px;top:634px;width:113px;height:20px;background:#c0ffc0;"></div>
<div style="left:757px;top:634px;width:101px;height:20px;background:#c0ffc0;"></div>
<div style="left:860px;top:634px;width:56px;height:20px;background:#c0ffc0;"></div>
<span id="t87" style="left:297.8px;top:638px;font:400 13px/normal 'Liberation Mono',monospace;color:#111;letter-spacing:-0.050px;">6</span>
<span id="t88" style="left:451.6px;top:638px;font:400 13px/normal 'Liberation Mono',monospace;color:#111;letter-spacing:-0.050px;">1.470 ms</span>
<span id="t89" style="left:537.6px;top:638px;font:400 13px/normal 'Liberation Mono',monospace;color:#111;letter-spacing:-0.050px;">ACK</span>
<div style="left:295px;top:654px;width:621px;height:2px;background:#848484;"></div>
<div style="left:293px;top:655px;width:1px;height:23px;background:#e0e0e0;"></div>
<div style="left:917px;top:655px;width:1px;height:23px;background:#e0e0e0;"></div>
<div style="left:295px;top:656px;width:151px;height:21px;background:#e0e0e0;"></div>
<div style="left:448px;top:656px;width:85px;height:21px;background:#e0e0e0;"></div>
<div style="left:535px;top:656px;width:105px;height:21px;background:#e0e0e0;"></div>
<div style="left:642px;top:656px;width:113px;height:21px;background:#e0e0e0;"></div>
<div style="left:757px;top:656px;width:101px;height:21px;background:#e0e0e0;"></div>
<div style="left:860px;top:656px;width:56px;height:21px;background:#e0e0e0;"></div>
<span id="t90" style="left:297.8px;top:660px;font:400 13px/normal 'Liberation Mono',monospace;color:#111;letter-spacing:-0.050px;">7</span>
<span id="t91" style="left:451.6px;top:660px;font:400 13px/normal 'Liberation Mono',monospace;color:#111;letter-spacing:-0.050px;">1.550 ms</span>
<span id="t92" style="left:537.6px;top:660px;font:400 13px/normal 'Liberation Mono',monospace;color:#111;letter-spacing:-0.050px;">STOP</span>
<div style="left:295px;top:677px;width:621px;height:2px;background:#848484;"></div>
<div style="left:293px;top:678px;width:1px;height:22px;background:#e0e0e0;"></div>
<div style="left:917px;top:678px;width:1px;height:22px;background:#e0e0e0;"></div>
<div style="left:295px;top:679px;width:151px;height:20px;background:#e0e0e0;"></div>
<div style="left:448px;top:679px;width:85px;height:20px;background:#e0e0e0;"></div>
<div style="left:535px;top:679px;width:105px;height:20px;background:#e0e0e0;"></div>
<div style="left:642px;top:679px;width:113px;height:20px;background:#e0e0e0;"></div>
<div style="left:757px;top:679px;width:101px;height:20px;background:#e0e0e0;"></div>
<div style="left:860px;top:679px;width:56px;height:20px;background:#e0e0e0;"></div>
<span id="t93" style="left:297.8px;top:683px;font:400 13px/normal 'Liberation Mono',monospace;color:#111;letter-spacing:-0.050px;">8</span>
<span id="t94" style="left:451.6px;top:683px;font:400 13px/normal 'Liberation Mono',monospace;color:#111;letter-spacing:-0.050px;">1.620 ms</span>
<span id="t95" style="left:537.6px;top:683px;font:400 13px/normal 'Liberation Mono',monospace;color:#111;letter-spacing:-0.050px;">START</span>
<div style="left:295px;top:699px;width:621px;height:2px;background:#848484;"></div>
<div style="left:293px;top:700px;width:1px;height:22px;background:#f6f6f6;"></div>
<div style="left:917px;top:700px;width:1px;height:22px;background:#fff;"></div>
<div style="left:295px;top:701px;width:151px;height:20px;background:#fff;"></div>
<div style="left:448px;top:701px;width:85px;height:20px;background:#fff;"></div>
<div style="left:535px;top:701px;width:105px;height:20px;background:#fff;"></div>
<div style="left:642px;top:701px;width:113px;height:20px;background:#fff;"></div>
<div style="left:757px;top:701px;width:101px;height:20px;background:#fff;"></div>
<div style="left:860px;top:701px;width:56px;height:20px;background:#fff;"></div>
<span id="t96" style="left:297.8px;top:705px;font:400 13px/normal 'Liberation Mono',monospace;color:#111;letter-spacing:-0.050px;">9</span>
<span id="t97" style="left:451.6px;top:705px;font:400 13px/normal 'Liberation Mono',monospace;color:#111;letter-spacing:-0.050px;">1.630 ms</span>
<span id="t98" style="left:537.6px;top:705px;font:400 13px/normal 'Liberation Mono',monospace;color:#111;letter-spacing:-0.050px;">0x70</span>
<span id="t99" style="left:643.4px;top:705px;font:400 13px/normal 'Liberation Mono',monospace;color:#111;letter-spacing:-0.050px;">0b01110000</span>
<span id="t100" style="left:758.6px;top:705px;font:400 13px/normal 'Liberation Mono',monospace;color:#111;letter-spacing:-0.050px;">112</span>
<span id="t101" style="left:862.2px;top:705px;font:400 13px/normal 'Liberation Mono',monospace;color:#111;letter-spacing:-0.050px;">p</span>
<div style="left:295px;top:721px;width:621px;height:2px;background:#848484;"></div>
<div style="left:293px;top:722px;width:1px;height:23px;background:#c0ffc0;"></div>
<div style="left:917px;top:722px;width:1px;height:23px;background:#c0ffc0;"></div>
<div style="left:295px;top:723px;width:151px;height:21px;background:#c0ffc0;"></div>
<div style="left:448px;top:723px;width:85px;height:21px;background:#c0ffc0;"></div>
<div style="left:535px;top:723px;width:105px;height:21px;background:#c0ffc0;"></div>
<div style="left:642px;top:723px;width:113px;height:21px;background:#c0ffc0;"></div>
<div style="left:757px;top:723px;width:101px;height:21px;background:#c0ffc0;"></div>
<div style="left:860px;top:723px;width:56px;height:21px;background:#c0ffc0;"></div>
<span id="t102" style="left:297.8px;top:727px;font:400 13px/normal 'Liberation Mono',monospace;color:#111;letter-spacing:-0.050px;">10</span>
<span id="t103" style="left:451.6px;top:727px;font:400 13px/normal 'Liberation Mono',monospace;color:#111;letter-spacing:-0.050px;">2.090 ms</span>
<span id="t104" style="left:537.6px;top:727px;font:400 13px/normal 'Liberation Mono',monospace;color:#111;letter-spacing:-0.050px;">ACK</span>
<div style="left:295px;top:744px;width:621px;height:2px;background:#848484;"></div>
<div style="left:293px;top:745px;width:1px;height:22px;background:#f6f6f6;"></div>
<div style="left:917px;top:745px;width:1px;height:22px;background:#fff;"></div>
<div style="left:295px;top:746px;width:151px;height:20px;background:#fff;"></div>
<div style="left:448px;top:746px;width:85px;height:20px;background:#fff;"></div>
<div style="left:535px;top:746px;width:105px;height:20px;background:#fff;"></div>
<div style="left:642px;top:746px;width:113px;height:20px;background:#fff;"></div>
<div style="left:757px;top:746px;width:101px;height:20px;background:#fff;"></div>
<div style="left:860px;top:746px;width:56px;height:20px;background:#fff;"></div>
<span id="t105" style="left:297.8px;top:750px;font:400 13px/normal 'Liberation Mono',monospace;color:#111;letter-spacing:-0.050px;">11</span>
<span id="t106" style="left:451.6px;top:750px;font:400 13px/normal 'Liberation Mono',monospace;color:#111;letter-spacing:-0.050px;">2.120 ms</span>
<span id="t107" style="left:537.6px;top:750px;font:400 13px/normal 'Liberation Mono',monospace;color:#111;letter-spacing:-0.050px;">0x04</span>
<span id="t108" style="left:643.4px;top:750px;font:400 13px/normal 'Liberation Mono',monospace;color:#111;letter-spacing:-0.050px;">0b00000100</span>
<span id="t109" style="left:758.6px;top:750px;font:400 13px/normal 'Liberation Mono',monospace;color:#111;letter-spacing:-0.050px;">4</span>
<span id="t110" style="left:862.2px;top:750px;font:400 13px/normal 'Liberation Mono',monospace;color:#111;letter-spacing:-0.050px;"><span style="position:relative;display:inline-block;width:5px;height:10px;border:1px solid #000;box-sizing:border-box;vertical-align:-1px"></span></span>
<div style="left:295px;top:766px;width:621px;height:2px;background:#848484;"></div>
<div style="left:293px;top:767px;width:1px;height:23px;background:#c0ffc0;"></div>
<div style="left:917px;top:767px;width:1px;height:23px;background:#c0ffc0;"></div>
<div style="left:295px;top:768px;width:151px;height:21px;background:#c0ffc0;"></div>
<div style="left:448px;top:768px;width:85px;height:21px;background:#c0ffc0;"></div>
<div style="left:535px;top:768px;width:105px;height:21px;background:#c0ffc0;"></div>
<div style="left:642px;top:768px;width:113px;height:21px;background:#c0ffc0;"></div>
<div style="left:757px;top:768px;width:101px;height:21px;background:#c0ffc0;"></div>
<div style="left:860px;top:768px;width:56px;height:21px;background:#c0ffc0;"></div>
<span id="t111" style="left:297.8px;top:772px;font:400 13px/normal 'Liberation Mono',monospace;color:#111;letter-spacing:-0.050px;">12</span>
<span id="t112" style="left:451.6px;top:772px;font:400 13px/normal 'Liberation Mono',monospace;color:#111;letter-spacing:-0.050px;">2.590 ms</span>
<span id="t113" style="left:537.6px;top:772px;font:400 13px/normal 'Liberation Mono',monospace;color:#111;letter-spacing:-0.050px;">ACK</span>
<div style="left:295px;top:789px;width:621px;height:2px;background:#848484;"></div>
<div style="left:293px;top:790px;width:1px;height:22px;background:#f6f6f6;"></div>
<div style="left:917px;top:790px;width:1px;height:22px;background:#fff;"></div>
<div style="left:295px;top:791px;width:151px;height:20px;background:#fff;"></div>
<div style="left:448px;top:791px;width:85px;height:20px;background:#fff;"></div>
<div style="left:535px;top:791px;width:105px;height:20px;background:#fff;"></div>
<div style="left:642px;top:791px;width:113px;height:20px;background:#fff;"></div>
<div style="left:757px;top:791px;width:101px;height:20px;background:#fff;"></div>
<div style="left:860px;top:791px;width:56px;height:20px;background:#fff;"></div>
<span id="t114" style="left:297.8px;top:795px;font:400 13px/normal 'Liberation Mono',monospace;color:#111;letter-spacing:-0.050px;">13</span>
<span id="t115" style="left:451.6px;top:795px;font:400 13px/normal 'Liberation Mono',monospace;color:#111;letter-spacing:-0.050px;">2.620 ms</span>
<span id="t116" style="left:537.6px;top:795px;font:400 13px/normal 'Liberation Mono',monospace;color:#111;letter-spacing:-0.050px;">0x08</span>
<span id="t117" style="left:643.4px;top:795px;font:400 13px/normal 'Liberation Mono',monospace;color:#111;letter-spacing:-0.050px;">0b00001000</span>
<span id="t118" style="left:758.6px;top:795px;font:400 13px/normal 'Liberation Mono',monospace;color:#111;letter-spacing:-0.050px;">8</span>
<span id="t119" style="left:862.2px;top:795px;font:400 13px/normal 'Liberation Mono',monospace;color:#111;letter-spacing:-0.050px;"><span style="position:relative;display:inline-block;width:5px;height:10px;border:1px solid #000;box-sizing:border-box;vertical-align:-1px"></span></span>
<div style="left:295px;top:811px;width:621px;height:2px;background:#848484;"></div>
<div style="left:293px;top:812px;width:1px;height:23px;background:#c0ffc0;"></div>
<div style="left:917px;top:812px;width:1px;height:23px;background:#c0ffc0;"></div>
<div style="left:295px;top:813px;width:151px;height:21px;background:#c0ffc0;"></div>
<div style="left:448px;top:813px;width:85px;height:21px;background:#c0ffc0;"></div>
<div style="left:535px;top:813px;width:105px;height:21px;background:#c0ffc0;"></div>
<div style="left:642px;top:813px;width:113px;height:21px;background:#c0ffc0;"></div>
<div style="left:757px;top:813px;width:101px;height:21px;background:#c0ffc0;"></div>
<div style="left:860px;top:813px;width:56px;height:21px;background:#c0ffc0;"></div>
<span id="t120" style="left:297.8px;top:817px;font:400 13px/normal 'Liberation Mono',monospace;color:#111;letter-spacing:-0.050px;">14</span>
<span id="t121" style="left:451.6px;top:817px;font:400 13px/normal 'Liberation Mono',monospace;color:#111;letter-spacing:-0.050px;">3.090 ms</span>
<span id="t122" style="left:537.6px;top:817px;font:400 13px/normal 'Liberation Mono',monospace;color:#111;letter-spacing:-0.050px;">ACK</span>
<div style="left:295px;top:834px;width:621px;height:2px;background:#848484;"></div>
<div style="left:293px;top:835px;width:1px;height:22px;background:#e0e0e0;"></div>
<div style="left:917px;top:835px;width:1px;height:22px;background:#e0e0e0;"></div>
<div style="left:295px;top:836px;width:151px;height:20px;background:#e0e0e0;"></div>
<div style="left:448px;top:836px;width:85px;height:20px;background:#e0e0e0;"></div>
<div style="left:535px;top:836px;width:105px;height:20px;background:#e0e0e0;"></div>
<div style="left:642px;top:836px;width:113px;height:20px;background:#e0e0e0;"></div>
<div style="left:757px;top:836px;width:101px;height:20px;background:#e0e0e0;"></div>
<div style="left:860px;top:836px;width:56px;height:20px;background:#e0e0e0;"></div>
<span id="t123" style="left:297.8px;top:840px;font:400 13px/normal 'Liberation Mono',monospace;color:#111;letter-spacing:-0.050px;">15</span>
<span id="t124" style="left:451.6px;top:840px;font:400 13px/normal 'Liberation Mono',monospace;color:#111;letter-spacing:-0.050px;">3.180 ms</span>
<span id="t125" style="left:537.6px;top:840px;font:400 13px/normal 'Liberation Mono',monospace;color:#111;letter-spacing:-0.050px;">STOP</span>
<div style="left:295px;top:856px;width:621px;height:2px;background:#848484;"></div>
<div style="left:293px;top:857px;width:1px;height:22px;background:#e0e0e0;"></div>
<div style="left:917px;top:857px;width:1px;height:22px;background:#e0e0e0;"></div>
<div style="left:295px;top:858px;width:151px;height:20px;background:#e0e0e0;"></div>
<div style="left:448px;top:858px;width:85px;height:20px;background:#e0e0e0;"></div>
<div style="left:535px;top:858px;width:105px;height:20px;background:#e0e0e0;"></div>
<div style="left:642px;top:858px;width:113px;height:20px;background:#e0e0e0;"></div>
<div style="left:757px;top:858px;width:101px;height:20px;background:#e0e0e0;"></div>
<div style="left:860px;top:858px;width:56px;height:20px;background:#e0e0e0;"></div>
<span id="t126" style="left:297.8px;top:862px;font:400 13px/normal 'Liberation Mono',monospace;color:#111;letter-spacing:-0.050px;">16</span>
<span id="t127" style="left:451.6px;top:862px;font:400 13px/normal 'Liberation Mono',monospace;color:#111;letter-spacing:-0.050px;">3.240 ms</span>
<span id="t128" style="left:537.6px;top:862px;font:400 13px/normal 'Liberation Mono',monospace;color:#111;letter-spacing:-0.050px;">START</span>
<div style="left:295px;top:878px;width:621px;height:2px;background:#848484;"></div>
<div style="left:293px;top:879px;width:1px;height:23px;background:#f6f6f6;"></div>
<div style="left:917px;top:879px;width:1px;height:23px;background:#fff;"></div>
<div style="left:295px;top:880px;width:151px;height:21px;background:#fff;"></div>
<div style="left:448px;top:880px;width:85px;height:21px;background:#fff;"></div>
<div style="left:535px;top:880px;width:105px;height:21px;background:#fff;"></div>
<div style="left:642px;top:880px;width:113px;height:21px;background:#fff;"></div>
<div style="left:757px;top:880px;width:101px;height:21px;background:#fff;"></div>
<div style="left:860px;top:880px;width:56px;height:21px;background:#fff;"></div>
<span id="t129" style="left:297.8px;top:884px;font:400 13px/normal 'Liberation Mono',monospace;color:#111;letter-spacing:-0.050px;">17</span>
<span id="t130" style="left:451.6px;top:884px;font:400 13px/normal 'Liberation Mono',monospace;color:#111;letter-spacing:-0.050px;">3.250 ms</span>
<span id="t131" style="left:537.6px;top:884px;font:400 13px/normal 'Liberation Mono',monospace;color:#111;letter-spacing:-0.050px;">0x70</span>
<span id="t132" style="left:643.4px;top:884px;font:400 13px/normal 'Liberation Mono',monospace;color:#111;letter-spacing:-0.050px;">0b01110000</span>
<span id="t133" style="left:758.6px;top:884px;font:400 13px/normal 'Liberation Mono',monospace;color:#111;letter-spacing:-0.050px;">112</span>
<span id="t134" style="left:862.2px;top:884px;font:400 13px/normal 'Liberation Mono',monospace;color:#111;letter-spacing:-0.050px;">p</span>
<div style="left:295px;top:901px;width:621px;height:2px;background:#848484;"></div>
<div style="left:293px;top:902px;width:1px;height:22px;background:#c0ffc0;"></div>
<div style="left:917px;top:902px;width:1px;height:22px;background:#c0ffc0;"></div>
<div style="left:295px;top:903px;width:151px;height:20px;background:#c0ffc0;"></div>
<div style="left:448px;top:903px;width:85px;height:20px;background:#c0ffc0;"></div>
<div style="left:535px;top:903px;width:105px;height:20px;background:#c0ffc0;"></div>
<div style="left:642px;top:903px;width:113px;height:20px;background:#c0ffc0;"></div>
<div style="left:757px;top:903px;width:101px;height:20px;background:#c0ffc0;"></div>
<div style="left:860px;top:903px;width:56px;height:20px;background:#c0ffc0;"></div>
<span id="t135" style="left:297.8px;top:907px;font:400 13px/normal 'Liberation Mono',monospace;color:#111;letter-spacing:-0.050px;">18</span>
<span id="t136" style="left:451.6px;top:907px;font:400 13px/normal 'Liberation Mono',monospace;color:#111;letter-spacing:-0.050px;">3.710 ms</span>
<span id="t137" style="left:537.6px;top:907px;font:400 13px/normal 'Liberation Mono',monospace;color:#111;letter-spacing:-0.050px;">ACK</span>
<div style="left:295px;top:923px;width:621px;height:2px;background:#848484;"></div>
<div style="left:293px;top:924px;width:1px;height:23px;background:#f6f6f6;"></div>
<div style="left:917px;top:924px;width:1px;height:23px;background:#fff;"></div>
<div style="left:295px;top:925px;width:151px;height:21px;background:#fff;"></div>
<div style="left:448px;top:925px;width:85px;height:21px;background:#fff;"></div>
<div style="left:535px;top:925px;width:105px;height:21px;background:#fff;"></div>
<div style="left:642px;top:925px;width:113px;height:21px;background:#fff;"></div>
<div style="left:757px;top:925px;width:101px;height:21px;background:#fff;"></div>
<div style="left:860px;top:925px;width:56px;height:21px;background:#fff;"></div>
<span id="t138" style="left:297.8px;top:929px;font:400 13px/normal 'Liberation Mono',monospace;color:#111;letter-spacing:-0.050px;">19</span>
<span id="t139" style="left:451.6px;top:929px;font:400 13px/normal 'Liberation Mono',monospace;color:#111;letter-spacing:-0.050px;">3.740 ms</span>
<span id="t140" style="left:537.6px;top:929px;font:400 13px/normal 'Liberation Mono',monospace;color:#111;letter-spacing:-0.050px;">0x02</span>
<span id="t141" style="left:643.4px;top:929px;font:400 13px/normal 'Liberation Mono',monospace;color:#111;letter-spacing:-0.050px;">0b00000010</span>
<span id="t142" style="left:758.6px;top:929px;font:400 13px/normal 'Liberation Mono',monospace;color:#111;letter-spacing:-0.050px;">2</span>
<span id="t143" style="left:862.2px;top:929px;font:400 13px/normal 'Liberation Mono',monospace;color:#111;letter-spacing:-0.050px;"><span style="position:relative;display:inline-block;width:5px;height:10px;border:1px solid #000;box-sizing:border-box;vertical-align:-1px"></span></span>
<div style="left:295px;top:946px;width:621px;height:2px;background:#848484;"></div>
<div style="left:293px;top:947px;width:1px;height:22px;background:#c0ffc0;"></div>
<div style="left:917px;top:947px;width:1px;height:22px;background:#c0ffc0;"></div>
<div style="left:295px;top:948px;width:151px;height:20px;background:#c0ffc0;"></div>
<div style="left:448px;top:948px;width:85px;height:20px;background:#c0ffc0;"></div>
<div style="left:535px;top:948px;width:105px;height:20px;background:#c0ffc0;"></div>
<div style="left:642px;top:948px;width:113px;height:20px;background:#c0ffc0;"></div>
<div style="left:757px;top:948px;width:101px;height:20px;background:#c0ffc0;"></div>
<div style="left:860px;top:948px;width:56px;height:20px;background:#c0ffc0;"></div>
<span id="t144" style="left:297.8px;top:952px;font:400 13px/normal 'Liberation Mono',monospace;color:#111;letter-spacing:-0.050px;">20</span>
<span id="t145" style="left:451.6px;top:952px;font:400 13px/normal 'Liberation Mono',monospace;color:#111;letter-spacing:-0.050px;">4.210 ms</span>
<span id="t146" style="left:537.6px;top:952px;font:400 13px/normal 'Liberation Mono',monospace;color:#111;letter-spacing:-0.050px;">ACK</span>
<div style="left:295px;top:968px;width:621px;height:2px;background:#848484;"></div>
<div style="left:293px;top:969px;width:1px;height:23px;background:#f6f6f6;"></div>
<div style="left:917px;top:969px;width:1px;height:23px;background:#fff;"></div>
<div style="left:295px;top:970px;width:151px;height:21px;background:#fff;"></div>
<div style="left:448px;top:970px;width:85px;height:21px;background:#fff;"></div>
<div style="left:535px;top:970px;width:105px;height:21px;background:#fff;"></div>
<div style="left:642px;top:970px;width:113px;height:21px;background:#fff;"></div>
<div style="left:757px;top:970px;width:101px;height:21px;background:#fff;"></div>
<div style="left:860px;top:970px;width:56px;height:21px;background:#fff;"></div>
<span id="t147" style="left:297.8px;top:974px;font:400 13px/normal 'Liberation Mono',monospace;color:#111;letter-spacing:-0.050px;">21</span>
<span id="t148" style="left:451.6px;top:974px;font:400 13px/normal 'Liberation Mono',monospace;color:#111;letter-spacing:-0.050px;">4.240 ms</span>
<span id="t149" style="left:537.6px;top:974px;font:400 13px/normal 'Liberation Mono',monospace;color:#111;letter-spacing:-0.050px;">0xd8</span>
<span id="t150" style="left:643.4px;top:974px;font:400 13px/normal 'Liberation Mono',monospace;color:#111;letter-spacing:-0.050px;">0b11011000</span>
<span id="t151" style="left:758.6px;top:974px;font:400 13px/normal 'Liberation Mono',monospace;color:#111;letter-spacing:-0.050px;">216</span>
<span id="t152" style="left:862.2px;top:974px;font:400 13px/normal 'Liberation Mono',monospace;color:#111;letter-spacing:-0.050px;">Ø</span>
</div></div>
<div style="left:920px;top:215px;width:1px;height:763px;background:#5a5a5a;"></div>
<div style="left:921px;top:215px;width:14px;height:15px;background:linear-gradient(#fbfbfb,#d4d4d4);border-right:1px solid #9a9a9a;box-sizing:border-box"></div>
<svg style="left:923px;top:219px;" width="10" height="6" viewBox="0 0 10 6"><path d="M1 5H8.6L4.8 1Z" fill="#000"/></svg>
<div style="left:920px;top:230px;width:15px;height:559px;box-sizing:border-box;border:1px solid #2f4f8e;background:linear-gradient(90deg,#a8c4ee 0,#a8c4ee 1px,#8aa2ca 1px,#5a7ab2 60%,#4d6ca6 100%)"></div>
<svg style="left:0px;top:0px;" width="959" height="600" viewBox="0 0 959 600"><rect x="923" y="495" width="1" height="1" fill="#dce6f6"/><rect x="927" y="495" width="1" height="1" fill="#dce6f6"/><rect x="931" y="495" width="1" height="1" fill="#dce6f6"/><rect x="925" y="497" width="1" height="1" fill="#dce6f6"/><rect x="929" y="497" width="1" height="1" fill="#dce6f6"/><rect x="923" y="499" width="1" height="1" fill="#dce6f6"/><rect x="927" y="499" width="1" height="1" fill="#dce6f6"/><rect x="931" y="499" width="1" height="1" fill="#dce6f6"/><rect x="925" y="501" width="1" height="1" fill="#dce6f6"/><rect x="929" y="501" width="1" height="1" fill="#dce6f6"/><rect x="923" y="503" width="1" height="1" fill="#dce6f6"/><rect x="927" y="503" width="1" height="1" fill="#dce6f6"/><rect x="931" y="503" width="1" height="1" fill="#dce6f6"/><rect x="925" y="505" width="1" height="1" fill="#dce6f6"/><rect x="929" y="505" width="1" height="1" fill="#dce6f6"/><rect x="923" y="507" width="1" height="1" fill="#dce6f6"/><rect x="927" y="507" width="1" height="1" fill="#dce6f6"/><rect x="931" y="507" width="1" height="1" fill="#dce6f6"/><rect x="925" y="509" width="1" height="1" fill="#dce6f6"/><rect x="929" y="509" width="1" height="1" fill="#dce6f6"/><rect x="923" y="511" width="1" height="1" fill="#dce6f6"/><rect x="927" y="511" width="1" height="1" fill="#dce6f6"/><rect x="931" y="511" width="1" height="1" fill="#dce6f6"/><rect x="925" y="513" width="1" height="1" fill="#dce6f6"/><rect x="929" y="513" width="1" height="1" fill="#dce6f6"/><rect x="923" y="515" width="1" height="1" fill="#dce6f6"/><rect x="927" y="515" width="1" height="1" fill="#dce6f6"/><rect x="931" y="515" width="1" height="1" fill="#dce6f6"/><rect x="925" y="517" width="1" height="1" fill="#dce6f6"/><rect x="929" y="517" width="1" height="1" fill="#dce6f6"/><rect x="923" y="519" width="1" height="1" fill="#dce6f6"/><rect x="927" y="519" width="1" height="1" fill="#dce6f6"/><rect x="931" y="519" width="1" height="1" fill="#dce6f6"/><rect x="925" y="521" width="1" height="1" fill="#dce6f6"/><rect x="929" y="521" width="1" height="1" fill="#dce6f6"/><rect x="923" y="523" width="1" height="1" fill="#dce6f6"/><rect x="927" y="523" width="1" height="1" fill="#dce6f6"/><rect x="931" y="523" width="1" height="1" fill="#dce6f6"/></svg>
<div style="left:921px;top:789px;width:14px;height:175px;background:#dadada;border-right:1px solid #a8a8a8;box-sizing:border-box"></div>
<div style="left:921px;top:964px;width:14px;height:14px;background:linear-gradient(#fbfbfb,#d4d4d4);border-right:1px solid #9a9a9a;border-top:1px solid #a0a0a0;box-sizing:border-box"></div>
<svg style="left:923px;top:967px;" width="10" height="6" viewBox="0 0 10 6"><path d="M1 1H8.6L4.8 5Z" fill="#000"/></svg>
<div style="left:936px;top:214px;width:1px;height:765px;background:#f0f0f0;"></div>
<div style="left:738px;top:985px;width:57px;height:20px;box-sizing:border-box;border:1px solid #8a8a8a;border-radius:1px;background:linear-gradient(#fafafa,#d6d6d6)"></div>
<div style="left:740px;top:987px;width:53px;height:16px;box-sizing:border-box;border:1px solid #7a98cc;border-bottom-width:2px"></div>
<span id="t153" style="left:766.5px;transform:translateX(-50%);top:988px;font:400 13px/normal 'Liberation Sans',sans-serif;color:#1e1e1e;letter-spacing:-0.275px;">Analyze</span>
<div style="left:804px;top:985px;width:58px;height:20px;box-sizing:border-box;border:1px solid #8a8a8a;border-radius:1px;background:linear-gradient(#fafafa,#d6d6d6)"></div>
<span id="t154" style="left:833.0px;transform:translateX(-50%);top:988px;font:400 13px/normal 'Liberation Sans',sans-serif;color:#1e1e1e;letter-spacing:0.164px;">Export</span>
<div style="left:878px;top:985px;width:58px;height:20px;box-sizing:border-box;border:1px solid #8a8a8a;border-radius:1px;background:linear-gradient(#fafafa,#d6d6d6)"></div>
<span id="t155" style="left:907.0px;transform:translateX(-50%);top:988px;font:400 13px/normal 'Liberation Sans',sans-serif;color:#1e1e1e;letter-spacing:-0.088px;">Close</span>
</div></body></html>
